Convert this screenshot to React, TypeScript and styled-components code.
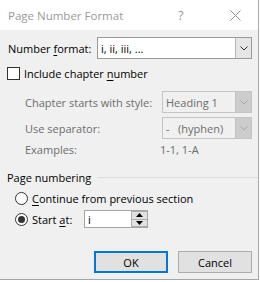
import React from "react";
import styled, { createGlobalStyle } from "styled-components";

const Global = createGlobalStyle`
  html, body { margin: 0; padding: 0; background: #ffffff; }
  body { font-family: "Segoe UI", "Open Sans", "Noto Sans", sans-serif; font-size: 11px; color: #000; }
  * { box-sizing: border-box; }
`;

const Dialog = styled.div`
  width: 259px;
  height: 280px;
  border-right: 1px solid #a6a6a6;
  border-bottom: 1px solid #a6a6a6;
  display: flex;
  flex-direction: column;
`;

const TitleBar = styled.div`
  height: 30px;
  background: #fff;
  display: flex;
  align-items: center;
  padding-left: 8px;
  color: #9a9a9a;
  font-size: 11.5px;
`;

const TitleText = styled.span`
  flex: 1;
`;

const TitleHelp = styled.span`
  width: 16px;
  margin-right: 36px;
  font-size: 13px;
  color: #9a9a9a;
`;

const CloseIcon = styled.svg`
  width: 11px;
  height: 11px;
  margin-right: 17px;
`;

const Body = styled.div`
  flex: 1;
  background: #f0f0f0;
  display: flex;
  flex-direction: column;
`;

const Row = styled.div<{ $top: number; $left: number; $h: number }>`
  margin-top: ${(p) => p.$top}px;
  padding-left: ${(p) => p.$left}px;
  height: ${(p) => p.$h}px;
  display: flex;
  align-items: center;
`;

const Label = styled.span<{ $w?: number; $disabled?: boolean }>`
  width: ${(p) => (p.$w ? `${p.$w}px` : "auto")};
  flex: none;
  white-space: nowrap;
  color: ${(p) => (p.$disabled ? "#6d6d6d" : "#000")};
`;

const U = styled.span`
  text-decoration: underline;
  text-underline-offset: 2px;
`;

const Combo = styled.div<{ $w: number; $disabled?: boolean }>`
  width: ${(p) => p.$w}px;
  height: 22px;
  border: 1px solid ${(p) => (p.$disabled ? "#c4c4c4" : "#9a9a9a")};
  background: ${(p) => (p.$disabled ? "#f0f0f0" : "#fff")};
  color: ${(p) => (p.$disabled ? "#6d6d6d" : "#000")};
  display: flex;
  align-items: stretch;
`;

const ComboText = styled.span`
  flex: 1;
  padding-left: 3px;
  display: flex;
  align-items: center;
  white-space: pre;
`;

const ComboButton = styled.div<{ $disabled?: boolean }>`
  width: 16px;
  background: ${(p) => (p.$disabled ? "#cccccc" : "#e5e5e5")};
  border-left: 1px solid ${(p) => (p.$disabled ? "#c4c4c4" : "#b8b8b8")};
  display: flex;
  align-items: center;
  justify-content: center;
`;

const Chevron = ({ color }: { color: string }) => (
  <svg width="8" height="5" viewBox="0 0 8 5">
    <path d="M0.5 0.5 L4 4 L7.5 0.5" fill="none" stroke={color} strokeWidth="1" />
  </svg>
);

const CheckBox = styled.div`
  width: 13px;
  height: 13px;
  border: 1px solid #333;
  background: #fff;
  margin-right: 4px;
`;

const SectionLine = styled.div`
  flex: 1;
  height: 1px;
  background: #dcdcdc;
  margin-left: 7px;
`;

const Radio = styled.div<{ $checked?: boolean }>`
  width: 13px;
  height: 13px;
  border-radius: 50%;
  border: 1px solid #333;
  background: #fff;
  margin-right: 4px;
  display: flex;
  align-items: center;
  justify-content: center;
  &::after {
    content: "";
    display: ${(p) => (p.$checked ? "block" : "none")};
    width: 7px;
    height: 7px;
    border-radius: 50%;
    background: #333;
  }
`;

const Spin = styled.div`
  width: 64px;
  height: 18px;
  border: 1px solid #a6a6a6;
  background: #fff;
  display: flex;
`;

const SpinText = styled.span`
  flex: 1;
  padding-left: 3px;
  display: flex;
  align-items: center;
  color: #000;
`;

const SpinButtons = styled.div`
  width: 16px;
  display: flex;
  flex-direction: column;
`;

const SpinButton = styled.div`
  flex: 1;
  background: #e1e1e1;
  border: 1px solid #adadad;
  border-right: none;
  display: flex;
  align-items: center;
  justify-content: center;
  & + & { border-top: none; }
`;

const Buttons = styled.div`
  margin-top: 23px;
  padding-left: 94px;
  display: flex;
  gap: 10px;
`;

const Button = styled.div<{ $default?: boolean }>`
  width: 74px;
  height: 22px;
  background: #e1e1e1;
  border: ${(p) => (p.$default ? "2px solid #0078d7" : "1px solid #adadad")};
  display: flex;
  align-items: center;
  justify-content: center;
`;

export default function App() {
  return (
    <>
      <Global />
      <Dialog>
        <TitleBar>
          <TitleText>Page Number Format</TitleText>
          <TitleHelp>?</TitleHelp>
          <CloseIcon viewBox="0 0 11 11">
            <path d="M0.5 0.5 L10.5 10.5 M10.5 0.5 L0.5 10.5" stroke="#8c8c8c" strokeWidth="1" />
          </CloseIcon>
        </TitleBar>
        <Body>
          <Row $top={7} $left={8} $h={22}>
            <Label $w={89}>
              Number <U>f</U>ormat:
            </Label>
            <Combo $w={155}>
              <ComboText>i, ii, iii, ...</ComboText>
              <ComboButton>
                <Chevron color="#333" />
              </ComboButton>
            </Combo>
          </Row>
          <Row $top={8} $left={7} $h={13}>
            <CheckBox />
            <Label>
              Include chapter <U>n</U>umber
            </Label>
          </Row>
          <Row $top={11} $left={25} $h={22}>
            <Label $w={137} $disabled>
              Chapter starts with style:
            </Label>
            <Combo $w={90} $disabled>
              <ComboText>Heading 1</ComboText>
              <ComboButton $disabled>
                <Chevron color="#a8a8a8" />
              </ComboButton>
            </Combo>
          </Row>
          <Row $top={4} $left={25} $h={22}>
            <Label $w={137} $disabled>
              Use separator:
            </Label>
            <Combo $w={90} $disabled>
              <ComboText>{"-   (hyphen)"}</ComboText>
              <ComboButton $disabled>
                <Chevron color="#a8a8a8" />
              </ComboButton>
            </Combo>
          </Row>
          <Row $top={2} $left={25} $h={16}>
            <Label $w={135} $disabled>
              Examples:
            </Label>
            <Label $disabled>1-1, 1-A</Label>
          </Row>
          <Row $top={12} $left={7} $h={16}>
            <Label>Page numbering</Label>
            <SectionLine />
          </Row>
          <Row $top={5} $left={15} $h={16}>
            <Radio />
            <Label>
              <U>C</U>ontinue from previous section
            </Label>
          </Row>
          <Row $top={4} $left={15} $h={18}>
            <Radio $checked />
            <Label $w={52}>
              Start <U>a</U>t:
            </Label>
            <Spin>
              <SpinText>i</SpinText>
              <SpinButtons>
                <SpinButton>
                  <svg width="7" height="4" viewBox="0 0 7 4">
                    <path d="M0 4 L3.5 0 L7 4 Z" fill="#000" />
                  </svg>
                </SpinButton>
                <SpinButton>
                  <svg width="7" height="4" viewBox="0 0 7 4">
                    <path d="M0 0 L3.5 4 L7 0 Z" fill="#000" />
                  </svg>
                </SpinButton>
              </SpinButtons>
            </Spin>
          </Row>
          <Buttons>
            <Button $default>OK</Button>
            <Button>Cancel</Button>
          </Buttons>
        </Body>
      </Dialog>
    </>
  );
}
